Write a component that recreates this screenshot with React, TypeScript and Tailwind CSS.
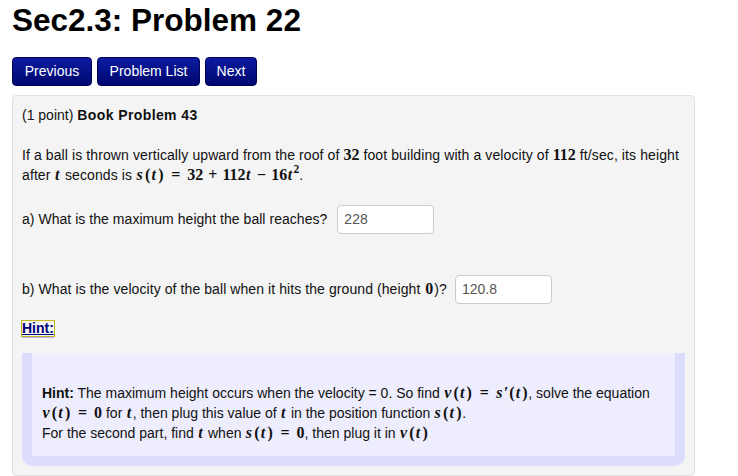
import React from "react";

const M = ({ children }: { children: React.ReactNode }) => (
  <span className="font-['Liberation_Serif',serif] font-bold text-[16px] leading-[0] not-italic tracking-normal">
    {children}
  </span>
);

const V = ({ children }: { children: React.ReactNode }) => (
  <i className="italic pl-[0.5px] pr-[1.5px]">{children}</i>
);
const P = ({ c }: { c: string }) => <span className="px-[0.7px]">{c}</span>;

const Eq = () => <span className="mx-[7px]">=</span>;
const Op = ({ c }: { c: string }) => <span className="mx-[5px]">{c}</span>;

export default function App() {
  return (
    <div className="min-h-[476px] bg-white font-['Liberation_Sans',Arial,sans-serif] text-[14px] leading-[20px] text-[#111]">
      <div className="ml-[12px] w-[683px]">
        <h1 className="pt-[3px] text-[31.5px] leading-[34.65px] font-bold text-black">Sec2.3: Problem 22</h1>

        <div className="mt-[19px] flex gap-[5px]">
          {[
            ["Previous", "w-[80px]"],
            ["Problem List", "w-[103px]"],
            ["Next", "w-[52px]"],
          ].map(([label, w]) => (
            <button
              key={label}
              className={`${w} h-[29px] flex items-center justify-center rounded-[4px] bg-gradient-to-b from-[#0c1ba0] to-[#000670] border border-[#000558] text-white text-[14px]`}
            >
              {label}
            </button>
          ))}
        </div>

        <div className="mt-[9px] rounded-[4px] border border-[#e1e1e1] bg-[#f4f4f4] px-[9px] pt-[9px] pb-[9px]">
          <div>
            (1 point) <b className="tracking-[0.4px]">Book Problem 43</b>
          </div>

          <p className="mt-[20px] tracking-[0.1px]">
            If a ball is thrown vertically upward from the roof of <M>32</M> foot building with a velocity of{" "}
            <M>112</M> ft/sec, its height
            <br />
            after <M><V>t</V></M> seconds is{" "}
            <M>
              <V>s</V><P c="(" /><V>t</V><P c=")" /><Eq />32<Op c="+" />112<V>t</V><Op c="−" />16<V>t</V>
              <sup className="text-[11.5px] -top-[0.6em]">2</sup>
            </M>
            .
          </p>

          <div className="mt-[20px] flex items-center h-[29px]">
            <span className="tracking-[0.04px]">a) What is the maximum height the ball reaches?</span>
            <div className="ml-[10px] h-[29px] w-[97px] rounded-[4px] border border-[#cccccc] bg-white flex items-center px-[6px] text-[#555]">
              228
            </div>
          </div>

          <div className="mt-[41px] flex items-center h-[29px]">
            <span className="tracking-[0.08px]">
              b) What is the velocity of the ball when it hits the ground (height <M><span className="px-[1px]">0</span></M>)?
            </span>
            <div className="ml-[8px] h-[29px] w-[97px] rounded-[4px] border border-[#cccccc] bg-white flex items-center px-[6px] text-[#555]">
              120.8
            </div>
          </div>

          <div className="mt-[15px] h-[20px] flex items-center">
            <span className="font-bold text-[#00007a] underline outline outline-1 outline-[#c4b820] shadow-[0_2px_0_#b4b4f4] leading-[15px]">
              Hint:
            </span>
          </div>

          <div className="mt-[14px] rounded-b-[10px] bg-[#dcdcfc] px-[10px] pb-[10px]">
            <div className="bg-[#ededfd] px-[10px] pt-[30px] pb-[13px]">
              <b>Hint:</b> The maximum height occurs when the velocity = 0. So find{" "}
              <M>
                <V>v</V><P c="(" /><V>t</V><P c=")" /><Eq /><V>s</V>′<P c="(" /><V>t</V><P c=")" />
              </M>
              , solve the equation
              <br />
              <M>
                <V>v</V><P c="(" /><V>t</V><P c=")" /><Eq />0
              </M>{" "}
              for <M><V>t</V></M>, then plug this value of <M><V>t</V></M> in the position function{" "}
              <M>
                <V>s</V><P c="(" /><V>t</V><P c=")" />
              </M>
              .
              <br />
              For the second part, find <M><V>t</V></M> when{" "}
              <M>
                <V>s</V><P c="(" /><V>t</V><P c=")" /><Eq />0
              </M>
              , then plug it in{" "}
              <M>
                <V>v</V><P c="(" /><V>t</V><P c=")" />
              </M>
            </div>
          </div>
        </div>
      </div>
    </div>
  );
}
